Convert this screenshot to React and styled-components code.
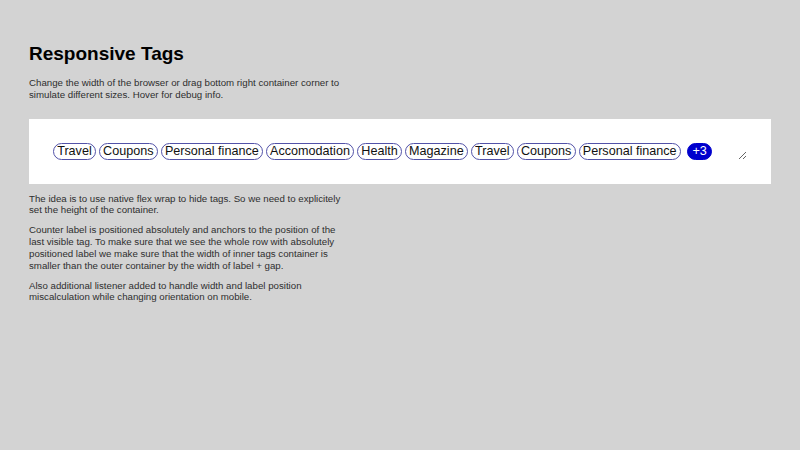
import React, { useLayoutEffect, useRef, useState } from 'react'
import styled, { createGlobalStyle } from 'styled-components'

const GlobalStyle = createGlobalStyle`
  html, body {
    margin: 0;
    background: #d3d3d3;
    font-family: "Liberation Sans", Arial, sans-serif;
  }
`

const Page = styled.div`
  padding: 42px 29px 0;
`

const Title = styled.h1`
  margin: 0;
  font-size: 19px;
  line-height: 23px;
  font-weight: bold;
  color: #000;
`

const Text = styled.p`
  margin: ${p => p.$top || 0}px 0 0;
  max-width: 314px;
  font-size: 9.7px;
  line-height: ${p => p.$lh || 11.7}px;
  color: #2e2e2e;
`

const Box = styled.div`
  margin-top: 18px;
  background: #fff;
  padding: 24px;
`

const Resizable = styled.div`
  position: relative;
  height: 17px;
  resize: both;
  overflow: hidden;
`

const TagRow = styled.div`
  display: flex;
  flex-wrap: wrap;
  gap: 3px;
  height: 17px;
  overflow: hidden;
  width: calc(100% - 30px);
`

const Tag = styled.span`
  box-sizing: border-box;
  height: 17px;
  padding: 0 3.2px;
  border: 1px solid #5252a8;
  border-radius: 9px;
  font-size: 12.6px;
  line-height: 15px;
  color: #111;
  white-space: nowrap;
  visibility: ${p => (p.$hidden ? 'hidden' : 'visible')};
`

const Counter = styled(Tag)`
  position: absolute;
  top: 0;
  padding: 0 4.5px;
  border-color: #0000cd;
  background: #0000cd;
  color: #fff;
`

const tags = ['Travel', 'Coupons', 'Personal finance', 'Accomodation', 'Health', 'Magazine',
  'Travel', 'Coupons', 'Personal finance', 'Accomodation', 'Health', 'Magazine']

function ResponsiveTags() {
  const rowRef = useRef(null)
  const [label, setLabel] = useState({ left: 0, visible: tags.length })

  useLayoutEffect(() => {
    // tags that wrapped to the second row are the hidden ones
    const items = Array.from(rowRef.current.children)
    const top = items[0].offsetTop
    const visible = items.filter(el => el.offsetTop === top)
    const last = visible[visible.length - 1]
    setLabel({ left: last.offsetLeft + last.offsetWidth + 6, visible: visible.length })
  }, [])

  const hidden = tags.length - label.visible

  return (
    <Box>
      <Resizable>
        <TagRow ref={rowRef}>
          {tags.map((t, i) => <Tag key={i} $hidden={i >= label.visible}>{t}</Tag>)}
        </TagRow>
        {hidden > 0 && <Counter style={{ left: label.left }}>+{hidden}</Counter>}
      </Resizable>
    </Box>
  )
}

export default function App() {
  return (
    <Page>
      <GlobalStyle />
      <Title>Responsive Tags</Title>
      <Text $top={12} $lh={12}>
        Change the width of the browser or drag bottom right container corner to simulate different sizes. Hover for debug info.
      </Text>
      <ResponsiveTags />
      <Text $top={8.5}>
        The idea is to use native flex wrap to hide tags. So we need to explicitely set the height of the container.
      </Text>
      <Text $top={8.5}>
        Counter label is positioned absolutely and anchors to the position of the last visible tag. To make sure that we see the whole row with absolutely positioned label we make sure that the width of inner tags container is smaller than the outer container by the width of label + gap.
      </Text>
      <Text $top={8.5}>
        Also additional listener added to handle width and label position miscalculation while changing orientation on mobile.
      </Text>
    </Page>
  )
}
